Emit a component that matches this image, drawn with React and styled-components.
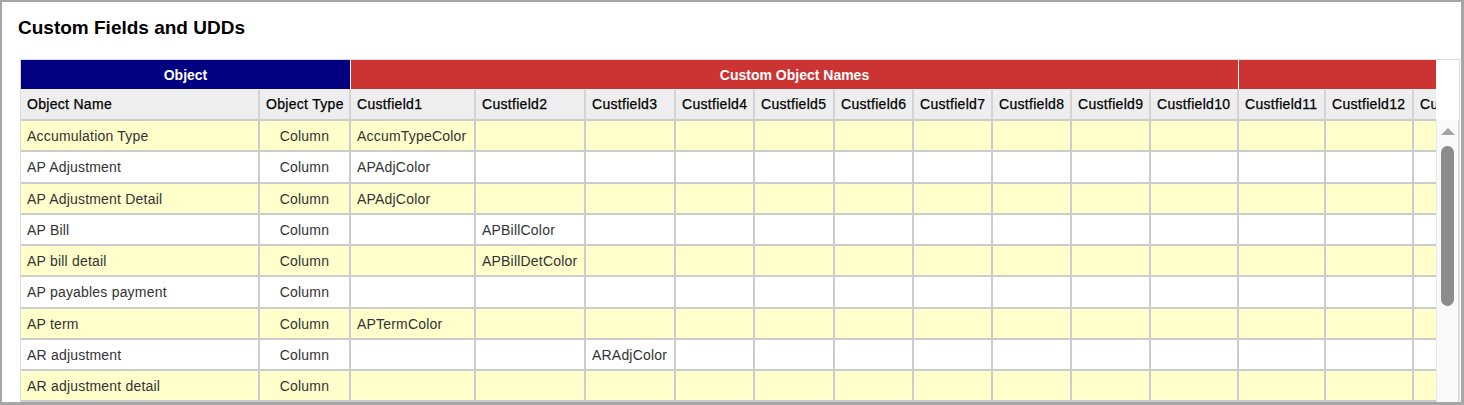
import React from 'react';
import styled, { createGlobalStyle } from 'styled-components';

const GlobalStyle = createGlobalStyle`
  body {
    margin: 0;
    background: #fff;
    font-family: "Liberation Sans", Arial, sans-serif;
  }
`;

const COL_WIDTHS = [239, 91, 125, 110, 90, 79, 80, 79, 79, 79, 79, 88, 87, 88, 88, 88, 88, 88, 88, 88, 88];
const CUSTFIELDS = Array.from({ length: 19 }, (_, i) => 'Custfield' + (i + 1));

const GROUPS = [
  { label: 'Object', span: 2, tone: 'navy' },
  { label: 'Custom Object Names', span: 10, tone: 'red' },
  { label: 'Custom Object Names', span: 9, tone: 'red' },
];

// object name, object type, { custfield index: value }
const ROWS = [
  ['Accumulation Type', 'Column', { 0: 'AccumTypeColor' }],
  ['AP Adjustment', 'Column', { 0: 'APAdjColor' }],
  ['AP Adjustment Detail', 'Column', { 0: 'APAdjColor' }],
  ['AP Bill', 'Column', { 1: 'APBillColor' }],
  ['AP bill detail', 'Column', { 1: 'APBillDetColor' }],
  ['AP payables payment', 'Column', {}],
  ['AP term', 'Column', { 0: 'APTermColor' }],
  ['AR adjustment', 'Column', { 2: 'ARAdjColor' }],
  ['AR adjustment detail', 'Column', {}],
  ['AR bill', 'Column', { 3: 'ARBillColor' }],
  ['AR bill detail', 'Column', {}],
];

const Panel = styled.div`
  width: 1464px;
  height: 405px;
  box-sizing: border-box;
  border: 2px solid #a6a6a6;
  border-right-width: 3px;
  border-bottom-width: 3px;
  background: #fff;
  overflow: hidden;
`;

const Title = styled.h2`
  margin: 0;
  padding: 15px 0 0 16px;
  font-size: 19px;
  line-height: 22px;
  font-weight: bold;
  color: #000;
`;

const Frame = styled.div`
  display: flex;
  margin: 20px 0 0 18px;
  width: 1440px;
  height: 360px;
  box-sizing: border-box;
  border: 1px solid #dcdcdc;
`;

const Viewport = styled.div`
  width: 1415px;
  flex: none;
  overflow: hidden;
`;

const Grid = styled.div`
  display: grid;
  grid-template-columns: ${COL_WIDTHS.map((w) => w + 'px').join(' ')};
  width: max-content;
  font-size: 14px;
`;

const GroupCell = styled.div`
  grid-column: span ${(p) => p.span};
  height: 29px;
  line-height: 31px;
  background: ${(p) => (p.tone === 'navy' ? '#000080' : '#cc3333')};
  color: #fff;
  font-weight: bold;
  text-align: center;
  border-right: 1px solid #fff;
  border-bottom: 1px solid #f2f2f2;
  overflow: hidden;
  white-space: nowrap;
`;

const HeadCell = styled.div`
  box-sizing: border-box;
  height: 31px;
  line-height: 29px;
  padding-left: 6px;
  background: #eeeeee;
  color: #000;
  letter-spacing: 0.3px;
  -webkit-text-stroke: 0.25px #000;
  border-right: 2px solid #d4d4d4;
  border-bottom: 2px solid #cccccc;
  white-space: nowrap;
  overflow: hidden;
`;

const Cell = styled.div`
  box-sizing: border-box;
  height: 31.25px;
  line-height: 27px;
  padding: 2px 6px 0;
  background: ${(p) => (p.$odd ? '#ffffcc' : '#ffffff')};
  color: #333;
  letter-spacing: 0.2px;
  text-align: ${(p) => (p.$center ? 'center' : 'left')};
  border-right: 2px solid #cccccc;
  border-bottom: 2px solid #cccccc;
  white-space: nowrap;
  overflow: hidden;
`;

const Rail = styled.div`
  width: 23px;
  flex: none;
  display: flex;
  flex-direction: column;
`;

const RailSpacer = styled.div`
  height: 60px;
  background: #fff;
`;

const Track = styled.div`
  flex: 1;
  display: flex;
  flex-direction: column;
  align-items: center;
  background: #fafafa;
  border-left: 1px solid #e8e8e8;
  border-right: 1px solid #dedede;
  padding-top: 8px;
`;

const Arrow = styled.div`
  width: 0;
  height: 0;
  border-left: 7px solid transparent;
  border-right: 7px solid transparent;
  border-bottom: 7px solid #a3a3a3;
`;

const Thumb = styled.div`
  width: 13px;
  height: 160px;
  margin-top: 11px;
  border-radius: 7px;
  background: #8c8c8c;
`;

export default function App() {
  return (
    <>
      <GlobalStyle />
      <Panel>
        <Title>Custom Fields and UDDs</Title>
        <Frame>
          <Viewport>
            <Grid>
              {GROUPS.map((g, i) => (
                <GroupCell key={i} span={g.span} tone={g.tone}>
                  {g.label}
                </GroupCell>
              ))}
              <HeadCell>Object Name</HeadCell>
              <HeadCell>Object Type</HeadCell>
              {CUSTFIELDS.map((c) => (
                <HeadCell key={c}>{c}</HeadCell>
              ))}
              {ROWS.map(([name, type, fields], r) => {
                const odd = r % 2 === 0;
                return (
                  <React.Fragment key={name}>
                    <Cell $odd={odd}>{name}</Cell>
                    <Cell $odd={odd} $center>{type}</Cell>
                    {CUSTFIELDS.map((c, i) => (
                      <Cell key={c} $odd={odd}>{fields[i] || ''}</Cell>
                    ))}
                  </React.Fragment>
                );
              })}
            </Grid>
          </Viewport>
          <Rail>
            <RailSpacer />
            <Track>
              <Arrow />
              <Thumb />
            </Track>
          </Rail>
        </Frame>
      </Panel>
    </>
  );
}
